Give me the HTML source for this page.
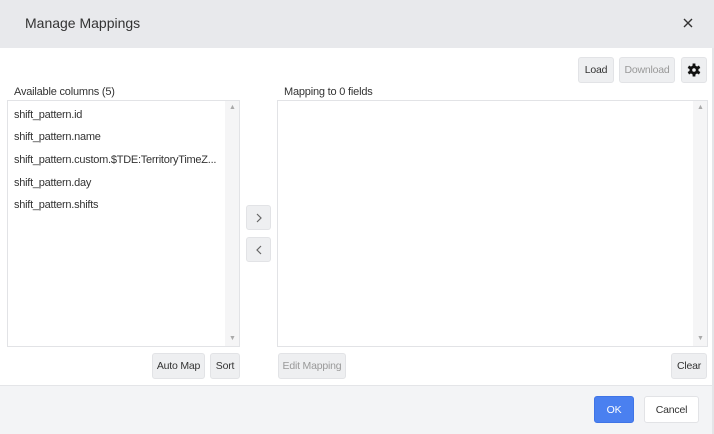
<!DOCTYPE html><html><head><style>
body{margin:0;width:714px;height:434px;position:relative;font-family:"Liberation Sans",sans-serif;background:#fff;overflow:hidden;color:#333}
.a{position:absolute;box-sizing:border-box}
.btn{position:absolute;box-sizing:border-box;background:#eeeff1;border:1px solid #e2e3e6;border-radius:3px;font-size:10.5px;letter-spacing:-0.2px;display:flex;align-items:center;justify-content:center;color:#333}
.it{position:absolute;left:14px;font-size:11px;letter-spacing:-0.25px;color:#333}
</style></head><body>
<div class="a" style="left:0;top:0;width:714px;height:48px;background:#e8e9ec"></div>
<div class="a" style="left:25px;top:15px;font-size:14px;color:#333">Manage Mappings</div>
<svg class="a" style="left:683px;top:18px" width="10" height="10"><path d="M1 1L9 9M9 1L1 9" stroke="#333" stroke-width="1.4"/></svg>
<div class="a" style="left:712px;top:48px;width:2px;height:386px;background:#e4e5e8"></div>
<div class="btn" style="left:578px;top:57px;width:36px;height:26px">Load</div>
<div class="btn" style="left:619px;top:57px;width:56px;height:26px;color:#999">Download</div>
<div class="btn" style="left:681px;top:57px;width:26px;height:26px"><svg width="14" height="14" viewBox="0 0 14 14"><g fill="#111"><circle cx="7" cy="7" r="4.6"/><rect x="5.6" y="0.5" width="2.8" height="13"/><rect x="5.6" y="0.5" width="2.8" height="13" transform="rotate(60 7 7)"/><rect x="5.6" y="0.5" width="2.8" height="13" transform="rotate(120 7 7)"/></g><circle cx="7" cy="7" r="1.8" fill="#eeeff1"/></svg></div>
<div class="a" style="left:14px;top:86px;font-size:11px;letter-spacing:-0.2px">Available columns (5)</div>
<div class="a" style="left:284px;top:86px;font-size:11px;letter-spacing:-0.2px">Mapping to 0 fields</div>
<div class="a" style="left:7px;top:100px;width:233px;height:247px;border:1px solid #e2e3e6"></div>
<div class="a" style="left:225px;top:101px;width:14px;height:245px;background:#f5f5f6"></div>
<div class="a" style="left:229px;top:104px;font-size:7px;color:#aaa">▲</div>
<div class="a" style="left:229px;top:335px;font-size:7px;color:#aaa">▼</div>
<div class="it" style="top:109px">shift_pattern.id</div>
<div class="it" style="top:131px">shift_pattern.name</div>
<div class="it" style="top:154px">shift_pattern.custom.$TDE:TerritoryTimeZ...</div>
<div class="it" style="top:177px">shift_pattern.day</div>
<div class="it" style="top:199px">shift_pattern.shifts</div>
<div class="a" style="left:277px;top:100px;width:431px;height:247px;border:1px solid #e2e3e6"></div>
<div class="a" style="left:693px;top:101px;width:14px;height:245px;background:#f5f5f6"></div>
<div class="a" style="left:697px;top:104px;font-size:7px;color:#aaa">▲</div>
<div class="a" style="left:697px;top:335px;font-size:7px;color:#aaa">▼</div>
<div class="btn" style="left:246px;top:205px;width:25px;height:25px"><svg width="8" height="10"><path d="M2 1L6 5L2 9" fill="none" stroke="#666" stroke-width="1.2"/></svg></div>
<div class="btn" style="left:246px;top:237px;width:25px;height:25px"><svg width="8" height="10"><path d="M6 1L2 5L6 9" fill="none" stroke="#666" stroke-width="1.2"/></svg></div>
<div class="btn" style="left:152px;top:353px;width:53px;height:26px">Auto Map</div>
<div class="btn" style="left:210px;top:353px;width:30px;height:26px">Sort</div>
<div class="btn" style="left:278px;top:353px;width:68px;height:26px;color:#999">Edit Mapping</div>
<div class="btn" style="left:671px;top:353px;width:36px;height:26px">Clear</div>
<div class="a" style="left:0;top:385px;width:712px;height:49px;background:#f3f4f6;border-top:1px solid #e4e5e8"></div>
<div class="btn" style="left:594px;top:396px;width:40px;height:27px;background:#4a80f0;border-color:#3f74e6;color:#fff">OK</div>
<div class="btn" style="left:644px;top:396px;width:55px;height:27px;background:#fff">Cancel</div>
</body></html>
